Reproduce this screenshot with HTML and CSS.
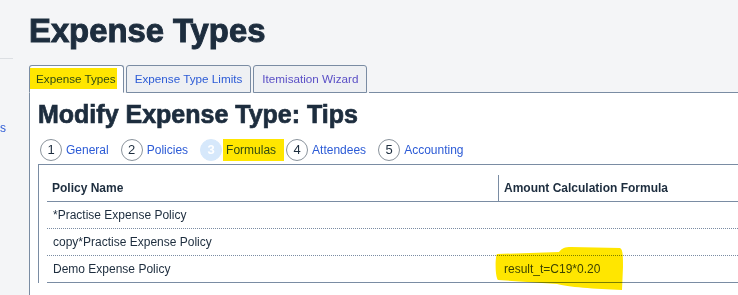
FILE: index.html
```html
<!DOCTYPE html>
<html lang="en">

<head>
  <meta charset="UTF-8" />
  <meta name="viewport" content="width=device-width, initial-scale=1.0" />
  <title>Expense Types</title>
  <link rel="stylesheet" href="styles.css">
</head>

<body>
  <div class="page">
    <aside class="side">
      <div class="side-rule"></div>
      <a class="side-link">s</a>
    </aside>
    <main class="main">
      <h1 class="title">Expense Types</h1>
      <div class="tabs">
        <span class="tab active"><mark class="hl">Expense Types</mark></span>
        <span class="tab">Expense Type Limits</span>
        <span class="tab visited">Itemisation Wizard</span>
        <span class="tab-fill"></span>
      </div>
      <section class="panel">
        <h2 class="subtitle">Modify Expense Type: Tips</h2>
        <div class="steps">
          <span class="step"><i>1</i><a>General</a></span>
          <span class="step"><i>2</i><a>Policies</a></span>
          <span class="step current"><i>3</i><mark class="hl">Formulas</mark></span>
          <span class="step"><i>4</i><a>Attendees</a></span>
          <span class="step"><i>5</i><a>Accounting</a></span>
        </div>
        <div class="grid">
          <div class="grid-head">
            <div class="cell">Policy Name</div>
            <div class="cell sep">Amount Calculation Formula</div>
          </div>
          <div class="grid-row">
            <div class="cell">*Practise Expense Policy</div>
            <div class="cell"></div>
          </div>
          <div class="grid-row">
            <div class="cell">copy*Practise Expense Policy</div>
            <div class="cell"></div>
          </div>
          <div class="grid-row last">
            <div class="cell">Demo Expense Policy</div>
            <div class="cell formula">result_t=C19*0.20
              <svg class="blob" width="130" height="44" viewBox="0 0 130 44">
                <path d="M2,7 L64,5 C67,1 70,0 76,0 L125,1 C128,2 128,10 128,20 L127,43 C100,42 72,40 62,37 L3,33 C0,30 0,10 2,7 Z" fill="#ffe600" />
              </svg>
            </div>
          </div>
        </div>
      </section>
    </main>
  </div>
</body>

</html>
```

FILE: styles.css
```css
:root {
  --bg: #f4f5f7;
  --ink: #1d2d3e;
  --line: #7a8ca3;
  --link: #2c5bd6;
  --visited: #5a4fc6;
  --marker: #ffe600;
}

html,
body {
  margin: 0;
  padding: 0;
}

body {
  background-color: var(--bg);
  font-family: "Liberation Sans", Arial, sans-serif;
  font-size: 12px;
  color: var(--ink);
  overflow: hidden;
}

.page {
  display: flex;
  width: 738px;
  height: 295px;
  overflow: hidden;
}

.side {
  width: 13px;
  flex: none;
  padding-top: 58px;
}

.side-rule {
  height: 1px;
  background-color: #dcdfe3;
}

.side-link {
  display: block;
  margin-top: 61px;
  color: var(--link);
  line-height: 16px;
}

.main {
  flex: 1;
  margin-left: 16px;
  display: flex;
  flex-direction: column;
  min-width: 0;
}

.title {
  margin: 11px 0 14px;
  font-size: 32.8px;
  line-height: 40px;
  font-weight: 700;
  -webkit-text-stroke: 1px var(--ink);
  white-space: nowrap;
}

.tabs {
  display: flex;
  align-items: flex-end;
  height: 28px;
  font-size: 11.7px;
}

.tab {
  height: 26px;
  line-height: 26px;
  padding: 0 8px;
  margin-right: 2px;
  border: 1px solid var(--line);
  border-radius: 3px 3px 0 0;
  background-color: #eef0f3;
  color: var(--link);
  white-space: nowrap;
}

.tab.visited {
  color: var(--visited);
}

.tab.active {
  background-color: #fff;
  border-bottom-color: #fff;
  padding: 0 6px 0 0;
}

.tab-fill {
  flex: 1;
  border-bottom: 1px solid var(--line);
}

.hl {
  background-color: var(--marker);
  color: #2f4a12;
}

.tab.active .hl {
  display: inline-block;
  line-height: 21px;
  padding: 0 1px 0 6px;
  margin-top: 2px;
}

.panel {
  flex: 1;
  background-color: #fff;
  border-left: 1px solid var(--line);
  padding-left: 8px;
}

.subtitle {
  margin: 6px 0 0;
  font-size: 25px;
  line-height: 30px;
  font-weight: 700;
  -webkit-text-stroke: 0.7px var(--ink);
  white-space: nowrap;
}

.steps {
  display: flex;
  align-items: center;
  gap: 12px;
  height: 22px;
  margin-top: 10px;
  padding-left: 2px;
  white-space: nowrap;
}

.step {
  display: flex;
  align-items: center;
  gap: 4px;
}

.step i {
  font-style: normal;
  width: 20px;
  height: 20px;
  line-height: 20px;
  text-align: center;
  border: 1px solid #8a939c;
  border-radius: 50%;
  font-size: 13px;
}

.step a {
  color: var(--link);
}

.step.current i {
  border-color: #d6e8fb;
  background-color: #d6e8fb;
  color: #fff;
  font-weight: 700;
}

.step.current {
  gap: 1px;
}

.step.current .hl {
  line-height: 22px;
  padding: 0 8px 0 3px;
  margin-right: -10px;
}

.grid {
  margin-top: 3px;
  border-top: 1px solid var(--line);
  border-left: 1px solid var(--line);
  padding-left: 8px;
  white-space: nowrap;
}

.grid-head,
.grid-row {
  display: grid;
  grid-template-columns: 451px 1fr;
}

.grid-head {
  padding-top: 10px;
  border-bottom: 1px solid var(--line);
}

.grid-head .cell {
  height: 26px;
  line-height: 14px;
  padding: 6px 5px 0;
  box-sizing: border-box;
  font-weight: 700;
}

.grid-head .sep {
  border-left: 1px solid var(--line);
}

.grid-row {
  border-bottom: 1px dotted var(--line);
}

.grid-row.last {
  border-bottom: 1px solid var(--line);
}

.grid-row .cell {
  height: 26px;
  line-height: 26px;
  padding-left: 6px;
}

.formula {
  position: relative;
  color: #3c4a16;
}

.blob {
  position: absolute;
  left: -3px;
  top: -9px;
  mix-blend-mode: multiply;
}
```
